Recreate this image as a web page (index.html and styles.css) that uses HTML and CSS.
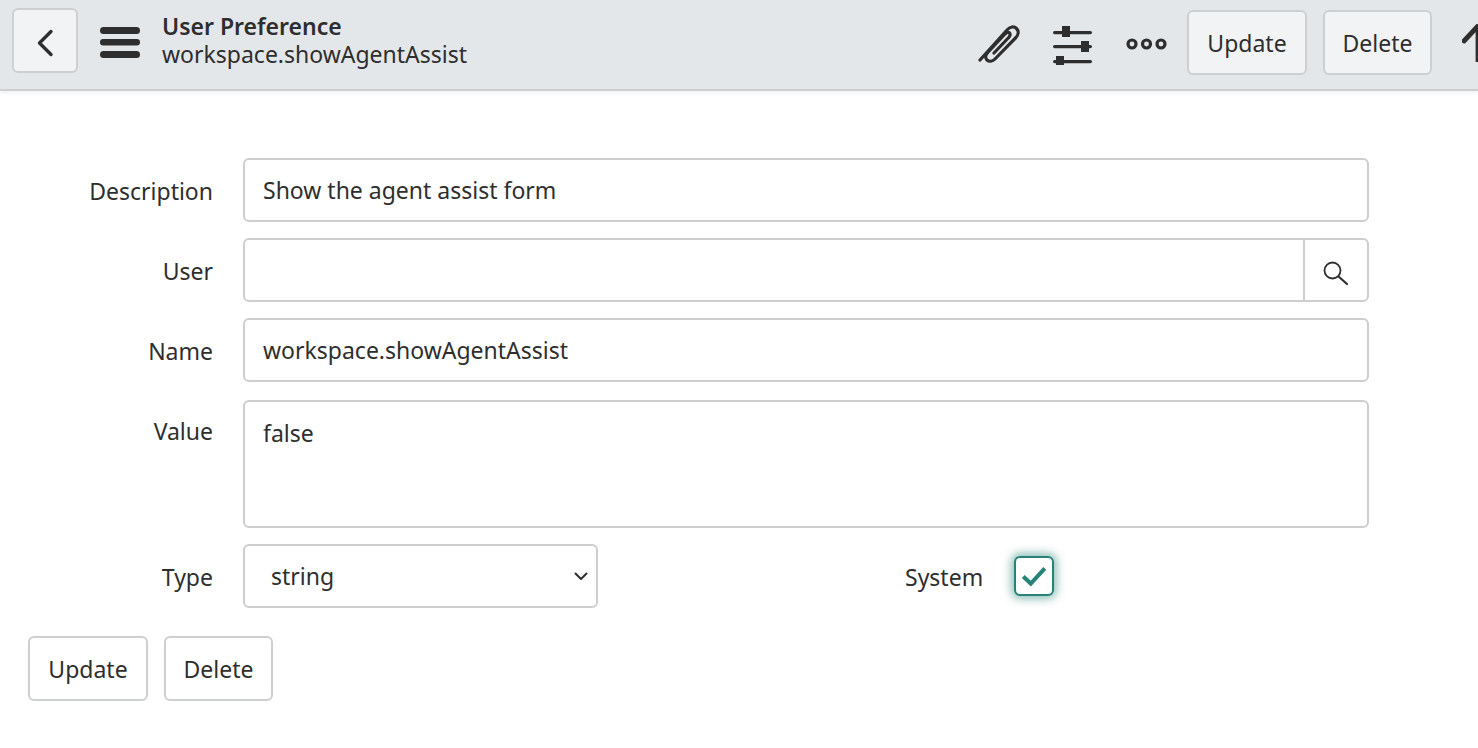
FILE: index.html
```html
<!DOCTYPE html>
<html lang="en">
<head>
<meta charset="utf-8">
<title>User Preference</title>
<link rel="stylesheet" href="styles.css">
</head>
<body>
<header class="header">
  <button class="btn btn-back" aria-label="Back">
    <svg width="18" height="28" viewBox="0 0 18 28"><path d="M15 2.500 3.500 14 15 25.500" fill="none" stroke="#2e2e2e" stroke-width="3.400" stroke-linecap="round" stroke-linejoin="round"/></svg>
  </button>
  <svg class="menu" width="40" height="32" viewBox="0 0 40 32"><g fill="#2e2e2e"><rect x="0" y="0" width="40" height="7" rx="3.500"/><rect x="0" y="12" width="40" height="6.500" rx="3.200"/><rect x="0" y="24" width="40" height="7" rx="3.500"/></g></svg>
  <div class="titles">
    <div class="title">User Preference</div>
    <div class="subtitle">workspace.showAgentAssist</div>
  </div>
  <div class="actions">
    <svg class="icon-clip" width="44" height="44" viewBox="0 0 44 44"><path d="M3 40 30 10c3-3.500 7-4 9.500-1.500s2 6.500-1 9.500L18 39c-2.500 2.500-6 3-8 1s-1.500-5 .8-7.500L28 14c1.500-1.500 3.500-2 4.500-1s.8 3-.8 4.500L17 33" transform="translate(0 -2)" fill="none" stroke="#2e2e2e" stroke-width="3.200" stroke-linecap="round" stroke-linejoin="round"/></svg>
    <svg class="icon-sliders" width="40" height="42" viewBox="0 0 40 42"><g fill="#2e2e2e"><rect x="0" y="8" width="39" height="3.200" rx="1.600"/><rect x="9" y="3" width="8" height="11"/><rect x="0" y="22" width="39" height="3.200" rx="1.600"/><rect x="28" y="18" width="8" height="11"/><rect x="0" y="37" width="39" height="3.200" rx="1.600"/><rect x="3" y="33" width="8" height="11"/></g></svg>
    <svg class="icon-more" width="41" height="14" viewBox="0 0 41 14"><g fill="none" stroke="#2e2e2e" stroke-width="3.200"><circle cx="6" cy="7" r="4"/><circle cx="20.500" cy="7" r="4"/><circle cx="35" cy="7" r="4"/></g></svg>
    <button class="btn btn-head btn-update-head">Update</button>
    <button class="btn btn-head btn-delete-head">Delete</button>
    <svg class="icon-up" width="32" height="38" viewBox="0 0 32 38"><path d="M2 17 16 2l14 15M16 2v36" fill="none" stroke="#2e2e2e" stroke-width="4.800" stroke-linecap="round" stroke-linejoin="round"/></svg>
  </div>
</header>
<main class="form">
  <div class="row">
    <label class="label">Description</label>
    <input class="field" type="text" value="Show the agent assist form">
  </div>
  <div class="row">
    <label class="label">User</label>
    <div class="lookup">
      <input class="lookup-input" type="text" value="">
      <span class="lookup-btn">
        <svg width="28" height="28" viewBox="0 0 28 28"><circle cx="11.500" cy="11.500" r="8" fill="none" stroke="#2e2e2e" stroke-width="1.800"/><path d="M17.500 17.500 26 25" fill="none" stroke="#2e2e2e" stroke-width="2.200" stroke-linecap="round"/></svg>
      </span>
    </div>
  </div>
  <div class="row row-name">
    <label class="label">Name</label>
    <input class="field" type="text" value="workspace.showAgentAssist">
  </div>
  <div class="row row-value">
    <label class="label">Value</label>
    <textarea class="field area">false</textarea>
  </div>
  <div class="row row-type">
    <label class="label">Type</label>
    <div class="type-col">
      <div class="select-wrap">
        <select class="select"><option>string</option></select>
        <svg class="chevron" width="14" height="9" viewBox="0 0 14 9"><path d="M1.500 1.500 7 7l5.500-5.500" fill="none" stroke="#2e2e2e" stroke-width="2" stroke-linecap="round" stroke-linejoin="round"/></svg>
      </div>
      <div class="system">
        <span class="system-label">System</span>
        <span class="check">
          <svg width="28" height="24" viewBox="0 0 26 22"><path d="M3 11.500 10 18 23 4" fill="none" stroke="#278278" stroke-width="3.800"/></svg>
        </span>
      </div>
    </div>
  </div>
  <div class="buttons">
    <button class="btn btn-white btn-update">Update</button>
    <button class="btn btn-white btn-delete">Delete</button>
  </div>
</main>
</body>
</html>
```
FILE: styles.css
```css
* { box-sizing: border-box; }
html, body { margin: 0; padding: 0; height: 100%; background: #fff; overflow: hidden; }
body { font-family: "Noto Sans", "Open Sans", sans-serif; font-size: 23px; color: #2e2e2e; }

.header {
  display: flex;
  align-items: center;
  height: 91px;
  padding: 0 0 2px 12px;
  background: #e4e7ea;
  border-bottom: 2px solid #cfcfcf;
  box-shadow: 0 2px 4px rgba(0,0,0,.06);
  overflow: hidden;
}
.btn {
  font: inherit;
  color: #2e2e2e;
  border: 2px solid #cdcfd1;
  border-radius: 6px;
  background: #f2f3f5;
  padding: 0;
  display: flex;
  align-items: center;
  justify-content: center;
}
.btn-back { width: 66px; height: 65px; margin-top: -6px; padding-top: 4px; }
.menu { margin-left: 22px; flex: none; margin-top: -1px; }
.titles { margin-left: 22px; line-height: 28px; padding-bottom: 8px; }
.title { font-weight: 600; font-size: 23px; }
.subtitle { font-size: 23px; }

.actions {
  margin-left: auto;
  margin-right: -16px;
  display: flex;
  align-items: center;
  flex: none;
}
.icon-clip { margin-right: 31px; margin-left: 1px; }
.icon-sliders { margin-right: 33px; margin-left: 1px; }
.icon-more { margin-right: 20px; }
.btn-head { height: 65px; margin-top: -2px; }
.btn-update-head { width: 120px; margin-right: 16px; }
.btn-delete-head { width: 109px; margin-right: 30px; }
.icon-up { flex: none; margin-top: -2px; }

.form { padding: 67px 109px 0 28px; }
.row { display: flex; align-items: flex-start; margin-bottom: 16px; }
.row-name { margin-bottom: 18px; }
.label { width: 185px; height: 64px; flex: none; text-align: right; line-height: 66px; font-size: 23px; }
.field, .lookup, .select {
  margin-left: 30px;
  height: 64px;
  border: 2px solid #cdcdcd;
  border-radius: 6px;
  background: #fff;
  font: inherit;
  color: #2e2e2e;
}
.field { flex: 1; min-width: 0; padding: 0 18px; outline: none; }
.lookup { flex: 1; display: flex; overflow: hidden; }
.lookup-input { flex: 1; min-width: 0; border: 0; outline: none; font: inherit; background: transparent; }
.lookup-btn {
  width: 64px;
  flex: none;
  border-left: 2px solid #cdcdcd;
  display: flex;
  align-items: center;
  justify-content: center;
  padding: 6px 3px 0 0;
}
.row-value { margin-bottom: 16px; }
.area { height: 128px; padding: 13px 18px; resize: none; line-height: 36px; }
.row-value .label { line-height: 62px; }

.type-col { flex: 1; display: flex; align-items: center; height: 64px; }
.select-wrap { position: relative; margin-left: 30px; width: 355px; height: 64px; }
.select {
  margin-left: 0;
  width: 100%;
  padding: 0 0 0 26px;
  appearance: none;
  -webkit-appearance: none;
  outline: none;
}
.chevron { position: absolute; right: 10px; top: 28px; pointer-events: none; }
.system { display: flex; align-items: center; margin-left: 307px; }
.system-label { line-height: 64px; padding-top: 2px; }
.check {
  margin-left: 31px;
  width: 40px;
  height: 40px;
  border: 2px solid #278278;
  border-radius: 6px;
  background: #fff;
  box-shadow: 0 0 9px 3px rgba(39,130,120,.5);
  display: flex;
  align-items: center;
  justify-content: center;
}
.buttons { display: flex; gap: 16px; margin-top: 28px; }
.btn-white { background: #fff; height: 65px; }
.btn-update { width: 120px; }
.btn-delete { width: 109px; }
```
